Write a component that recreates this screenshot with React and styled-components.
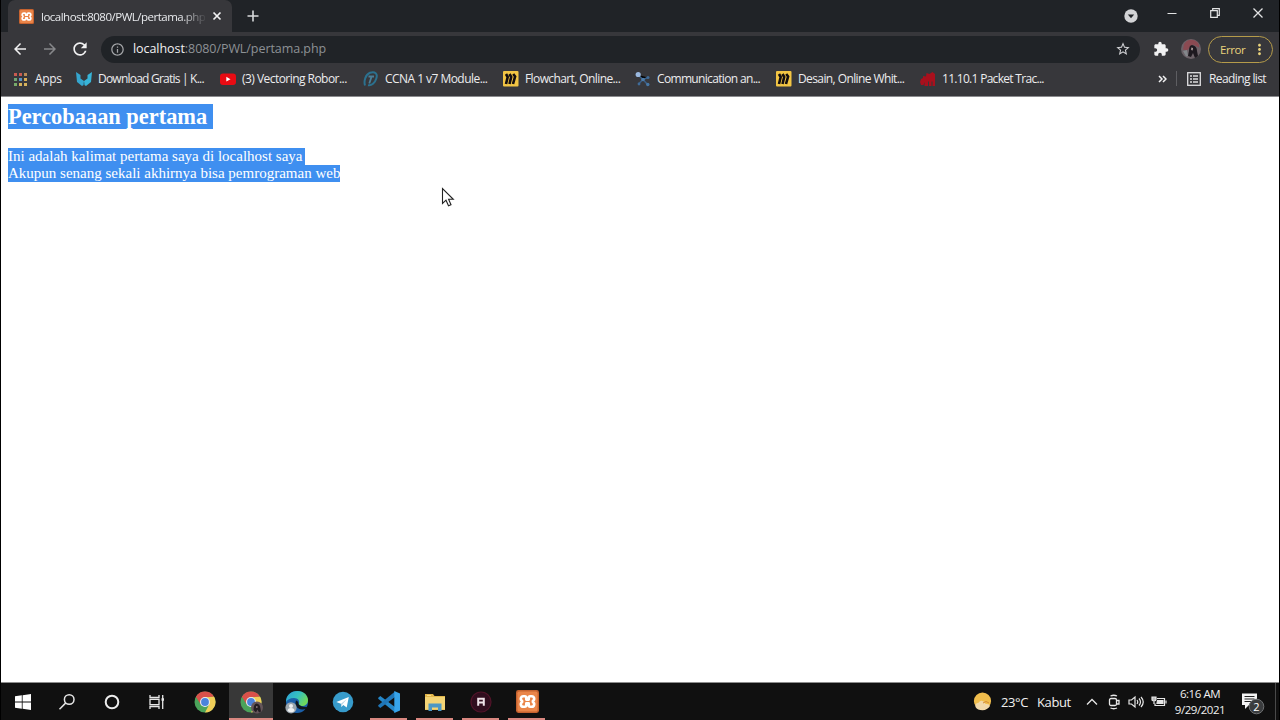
import React from "react";
import styled, { createGlobalStyle, css } from "styled-components";
import {
  MdArrowBack,
  MdArrowForward,
  MdRefresh,
  MdInfoOutline,
  MdStarBorder,
  MdExtension,
  MdMoreVert
} from "react-icons/md";

const GlobalStyle = createGlobalStyle`
  * {
    box-sizing: border-box;
  }
  body {
    margin: 0;
    overflow: hidden;
    background: #000;
  }
  svg {
    display: block;
    flex: none;
  }
`;

const Desktop = styled.div`
  width: 1280px;
  height: 720px;
  display: flex;
  flex-direction: column;
  border-left: 1px solid #000;
  border-right: 1px solid #000;
  background: #fff;
  font-family: "Open Sans", "Noto Sans", sans-serif;
  overflow: hidden;
`;

const Label = styled.span`
  font-size: ${props => props.size || 12}px;
  font-stretch: 94%;
  letter-spacing: ${props => props.spacing || 0}px;
  white-space: pre;
`;

/* window frame */

const TabStrip = styled.div`
  height: 32px;
  display: flex;
  align-items: center;
  background: #202327;
  color: #e8eaed;
`;

const Tab = styled.div`
  width: 224px;
  height: 32px;
  margin-left: 7px;
  padding: 0 9px 0 11px;
  display: flex;
  align-items: center;
  background: #37373b;
  border-radius: 7px 7px 0 0;
`;

const TabTitle = styled.div`
  width: 164px;
  margin-left: 7px;
  margin-right: 7px;
  overflow: hidden;
  line-height: 20px;
  mask-image: linear-gradient(to right, #000 140px, transparent 166px);
`;

const NewTab = styled.div`
  margin-left: 15px;
`;

const WindowButtons = styled.div`
  margin-left: auto;
  display: flex;
  align-items: center;
`;

const WindowButton = styled.div`
  width: ${props => props.width}px;
  display: flex;
  justify-content: center;
  padding-bottom: ${props => props.lift || 0}px;
`;

const Toolbar = styled.div`
  height: 34px;
  padding-left: 4px;
  display: flex;
  align-items: center;
  background: #37373b;
  color: #f1f1f2;
`;

const NavButton = styled.div`
  width: 30px;
  display: flex;
  justify-content: center;
  color: ${props => (props.dim ? "#87888b" : "#f1f1f2")};
`;

const Omnibox = styled.div`
  width: 1039px;
  height: 27px;
  margin-left: 6px;
  padding: 0 9px;
  display: flex;
  align-items: center;
  border-radius: 14px;
  background: #202327;
  color: #f1f1f2;
`;

const Address = styled(Label)`
  margin-left: 8px;
  line-height: 20px;
`;

const Path = styled.span`
  color: #8d9195;
`;

const StarSlot = styled.div`
  margin-left: auto;
  color: #d0d1d4;
`;

const ExtensionSlot = styled.div`
  margin-left: 13px;
`;

const AvatarSlot = styled.div`
  margin-left: 12px;
`;

const ErrorPill = styled.div`
  width: 65px;
  height: 27px;
  margin-left: 7px;
  padding: 0 4px 0 11px;
  display: flex;
  align-items: center;
  justify-content: space-between;
  border: 1px solid #b59b4a;
  border-radius: 14px;
  color: #e9d27c;
`;

const BookmarksBar = styled.div`
  height: 31px;
  padding: 0 12px 5px;
  display: flex;
  align-items: center;
  background: #37373b;
  border-bottom: 1px solid #8b8b8e;
  color: #ececee;
`;

const Bookmark = styled.div`
  width: ${props => props.width}px;
  display: flex;
  align-items: center;
  gap: ${props => props.gap || 6}px;
  line-height: 18px;
`;

const BookmarksEnd = styled.div`
  margin-left: auto;
  display: flex;
  align-items: center;
  line-height: 18px;
`;

const Divider = styled.div`
  width: 1px;
  height: 15px;
  margin: 0 10px 0 9px;
  background: #5e5e62;
`;

/* the php page */

const Page = styled.main`
  position: relative;
  flex: 1;
  padding: 7px 7px 0;
  background: #fff;
  font-family: "Liberation Serif", "Times New Roman", serif;
  color: #fff;
`;

const Heading = styled.h2`
  height: 25px;
  width: 205px;
  margin: 0 0 19px;
  background: #3f8ff0;
  font-size: 22.4px;
  line-height: 25px;
  white-space: nowrap;
`;

const Paragraph = styled.p`
  margin: 0;
  font-size: 15px;
  line-height: 17px;
`;

const Line = styled.span`
  display: block;
  width: ${props => props.width}px;
  height: 17px;
  background: #3f8ff0;
  white-space: nowrap;
`;

const Pointer = styled.svg`
  position: absolute;
  left: 440px;
  top: 90px;
`;

/* taskbar */

const Taskbar = styled.footer`
  height: 37px;
  display: flex;
  background: #101010;
  box-shadow: 0 -1px 0 #8d8d8d;
  position: relative;
  color: #f0f0f0;
`;

const SystemButton = styled.div`
  width: ${props => props.width || 45}px;
  display: flex;
  align-items: center;
  justify-content: center;
`;

const AppButton = styled.div`
  width: 46px;
  display: flex;
  align-items: center;
  justify-content: center;
  ${props =>
    props.running &&
    css`
      background: linear-gradient(#d98780, #d98780) 4px bottom / 37px 2px
        no-repeat;
    `};
  ${props =>
    props.active &&
    css`
      width: 44px;
      margin: 0 1px;
      background: #383838;
      border-bottom: 2px solid #d98780;
      padding-top: 2px;
    `};
`;

const AppList = styled.div`
  margin-left: 3px;
  display: flex;
`;

const Tray = styled.div`
  margin-left: auto;
  display: flex;
  align-items: center;
`;

const Weather = styled.div`
  width: 113px;
  display: flex;
  align-items: center;
  gap: 9px;
`;

const TrayIcon = styled.div`
  width: ${props => props.width}px;
  display: flex;
`;

const Clock = styled.div`
  width: 64px;
  display: flex;
  flex-direction: column;
  align-items: center;
  line-height: 16px;
`;

const Notifications = styled.div`
  width: 34px;
  margin-left: 9px;
  padding-top: 5px;
`;

const ShowDesktop = styled.div`
  width: 4px;
  height: 37px;
  border-left: 1px solid #4a4a4a;
`;

const XamppIcon = ({ size }) => (
  <svg width={size} height={size} viewBox="0 0 24 24">
    <rect width="24" height="24" rx="2.5" fill="#c5622f" />
    <rect x="1.5" y="1.5" width="21" height="21" rx="2" fill="#ea8549" />
    <path
      d="M9.200 6.500H7.600a2.600 2.600 0 0 0-1.200 4.900v1.200a2.600 2.600 0 0 0 1.200 4.900h1.600q1.500 0 1.500-1.500v-2h2.600v2q0 1.500 1.500 1.500h1.600a2.600 2.600 0 0 0 1.200-4.900v-1.200a2.600 2.600 0 0 0-1.200-4.900h-1.600q-1.500 0-1.500 1.500v2h-2.600V8q0-1.500-1.500-1.500Z"
      fill="none"
      stroke="#fff"
      strokeWidth="2.700"
      strokeLinejoin="round"
    />
  </svg>
);

const AppsIcon = () => (
  <svg width="14" height="14" viewBox="0 0 14 14">
    <path d="M1 1h3v3H1zM6 1h3v3H6z" fill="#c95a50" />
    <path d="M11 1h3v3h-3z" fill="#b98a55" />
    <path d="M1 6h3v3H1z" fill="#6fa672" />
    <path d="M6 6h3v3H6z" fill="#5a93c4" />
    <path d="M11 6h3v3h-3z" fill="#d9ad55" />
    <path d="M1 11h3v3H1z" fill="#78ab6b" />
    <path d="M6 11h3v3H6zM11 11h3v3h-3z" fill="#d6b25c" />
  </svg>
);

const WingsIcon = () => (
  <svg width="16" height="16" viewBox="0 0 16 16">
    <path d="M0 1l4.500 3v3.500L8 10l-.3 4-1.700 1-5-4z" fill="#35a6cf" />
    <path d="M16 1l-4.500 3v3.500L8 10l.3 4 1.700 1 5-4z" fill="#37b4d8" />
    <path d="M8 10l.5 4h-1z" fill="#236f93" />
  </svg>
);

const YoutubeIcon = () => (
  <svg width="16" height="16" viewBox="0 0 16 16">
    <rect y="2.5" width="16" height="11.5" rx="3" fill="#e80b13" />
    <path d="M6.3 5.8v4.800L10.500 8.200z" fill="#fff" />
  </svg>
);

const NetacadIcon = () => (
  <svg width="16" height="16" viewBox="0 0 16 16" fill="none">
    <path
      d="M2 14.500C.6 10 2.500 3.500 7 1.800c5-1.500 8 .6 6.300 5.700C12 12 8.500 15 5 14.200"
      stroke="#2b718f"
      strokeWidth="2"
    />
    <path d="M5.500 5.500h5.500M8.600 5.500L6.300 12.500" stroke="#4a7f98" strokeWidth="1.800" />
  </svg>
);

const MiroIcon = () => (
  <svg width="16" height="16" viewBox="0 0 16 16">
    <rect width="15.500" height="15.500" rx="1" fill="#f2c544" />
    <path
      d="M3 3l1.700 3L3 13M6.500 3l1.700 3-1.700 7M10.200 3l1.900 2.500L10 13"
      fill="none"
      stroke="#120d10"
      strokeWidth="2.600"
    />
  </svg>
);

const NodesIcon = () => (
  <svg width="16" height="16" viewBox="0 0 16 16">
    <path
      d="M3 4l5 4.500 5-2M8 8.500l-4 4M8 8.500l4.500 5"
      stroke="#3c5f86"
      strokeWidth="1.500"
    />
    <circle cx="3.200" cy="3.500" r="2.600" fill="#9ab8df" />
    <circle cx="8" cy="8.500" r="1.800" fill="#4d7dab" />
    <circle cx="13" cy="6.500" r="1.500" fill="#3f6b98" />
    <circle cx="4" cy="13" r="1.400" fill="#3f6b98" />
    <circle cx="12.800" cy="13.500" r="1.700" fill="#4677a6" />
  </svg>
);

const RedIcon = () => (
  <svg width="16" height="16" viewBox="0 0 16 16">
    <path
      d="M0 11l1-3 2-1V5l3 .5L6.500 2l3 1 3-2L15 3v12h-2.500v-4.500h-1V15H9v-4.500H8V15H4.500v-4l-1 3H1z"
      fill="#a9101d"
    />
  </svg>
);

const ListIcon = () => (
  <svg width="14" height="14" viewBox="0 0 14 14" fill="none" stroke="#dedee0">
    <rect x=".7" y=".7" width="12.600" height="12.600" strokeWidth="1.300" />
    <path d="M3 4h2M3 7h2M3 10h2M6 4h5M6 7h5M6 10h5" strokeWidth="1.300" />
  </svg>
);

const Avatar = ({ size }) => (
  <svg width={size} height={size} viewBox="0 0 20 20">
    <circle cx="10" cy="10" r="10" fill="#6c6268" />
    <path d="M3 5Q7-1 14 1.500q5 3 4 7l-6-3-6 6-4-1z" fill="#8a4a52" />
    <path d="M8 12q0-6 3-6 5 1 5 6l1 5-3 2-2-5-2 4-3-1z" fill="#1d191f" />
    <path d="M10.500 8.500l1.300.5-.3 2.500-1.200-.5z" fill="#d7c3c0" />
    <path d="M2 12l4-1 1 6-2 .5z" fill="#83878b" />
  </svg>
);

const ChromeIcon = ({ badge }) => (
  <svg width="24" height="24" viewBox="0 0 24 24">
    <circle cx="12" cy="12" r="10.500" fill="#4ba35a" />
    <path d="M2.900 6.750A10.500 10.500 0 0 1 21.100 6.750L12 7.200 7.800 14.400z" fill="#d9504a" />
    <path d="M21.100 6.750A10.500 10.500 0 0 1 12 22.500L16.200 14.400 12 7.200z" fill="#f0cf58" />
    <circle cx="12" cy="12" r="5" fill="#e9edf2" />
    <circle cx="12" cy="12" r="3.900" fill="#4a83dc" />
    {badge && (
      <g>
        <circle cx="18" cy="17.500" r="6" fill="#65565b" />
        <path d="M14.500 20q0-6 3-6.500 3.500.5 4 5l.5 3-2 1-1.500-3-1.500 3z" fill="#231d22" />
        <path d="M17.500 16l1 .5-.3 1.500-.9-.3z" fill="#c9aeb0" />
      </g>
    )}
  </svg>
);

const EdgeIcon = () => (
  <svg width="24" height="24" viewBox="0 0 24 24">
    <defs>
      <linearGradient id="edge-top" x1="0" y1="0" x2="1" y2=".5">
        <stop offset="0" stopColor="#2c9fd8" />
        <stop offset=".55" stopColor="#35c1c0" />
        <stop offset="1" stopColor="#6fd95c" />
      </linearGradient>
    </defs>
    <circle cx="12" cy="12" r="11" fill="#1b5fa8" />
    <path
      d="M1 12C1 5 6 1 12.500 1 19 1 23 5.500 23 10c0 4-3 6-6 6-2.500 0-4-1-3-2.500C15 11 13 8 9 8c-4 0-7 2-8 4z"
      fill="url(#edge-top)"
    />
    <path
      d="M11 10.500q2.500.5 2.500 3.500 2.500 3.500 9 3l-1.300 2q-8 1.500-10-3-1.500-3-.2-5.500z"
      fill="#101820"
    />
    <circle cx="6" cy="17.800" r="5.600" fill="#9aa5ad" />
    <circle cx="6" cy="16" r="2" fill="#eef0f1" />
    <path d="M2.500 21q0-3 3.500-3t3.500 3q-3 2.500-7 0z" fill="#eef0f1" />
  </svg>
);

const TelegramIcon = () => (
  <svg width="22" height="22" viewBox="0 0 22 22">
    <circle cx="11" cy="11" r="10.300" fill="#379bcb" />
    <path d="M4.300 11L16.800 6 14.700 16.500l-3.400-2.400-1.900 1.800-.5-3.200z" fill="#fff" />
    <path d="M8.900 12.700l6-4.700-4.600 5.400-.9 2.500z" fill="#b9d5e5" />
  </svg>
);

const VscodeIcon = () => (
  <svg width="24" height="24" viewBox="0 0 24 24">
    <path d="M1 8l2.300-2L18 17v5.500L1.500 9z" fill="#2587c8" />
    <path d="M1 16l2.300 2L18 7V1.500L1.500 15z" fill="#1f76b8" />
    <path d="M17.300 1L23 3.500v17L17.300 23z" fill="#37a4ea" />
  </svg>
);

const FolderIcon = () => (
  <svg width="22" height="20" viewBox="0 0 22 20">
    <path d="M1 2h8l1.500 2H21v14H1z" fill="#e2b64a" />
    <path d="M1 5h20v12.500H1z" fill="#f3d476" />
    <path d="M4.500 19v-7.500h13V19H14v-3.500H8V19z" fill="#4d97c4" />
    <path d="M3 3h4v1H3z" fill="#f6dc8d" />
  </svg>
);

const AIcon = () => (
  <svg width="22" height="22" viewBox="0 0 22 22">
    <circle cx="11" cy="11" r="10" fill="#300e1e" stroke="#511429" strokeWidth="1.200" />
    <path
      d="M8.200 14.800V7.700h5.600v7.100M8.200 11.600h5.600"
      fill="none"
      stroke="#eee3e8"
      strokeWidth="2"
    />
  </svg>
);

const WindowsIcon = () => (
  <svg width="16" height="16" viewBox="0 0 16 16" fill="#fff">
    <path d="M0 2.300l6.800-1v6.300H0zM7.600 1.200L16 0v7.600H7.600zM0 8.400h6.800v6.300L0 13.700zM7.600 8.400H16V16l-8.400-1.200z" />
  </svg>
);

const SearchIcon = () => (
  <svg width="18" height="18" viewBox="0 0 18 18" fill="none" stroke="#e6e6e6" strokeWidth="1.500">
    <circle cx="11.200" cy="6.500" r="4.800" />
    <path d="M7.800 9.900L1.500 16.300" />
  </svg>
);

const TaskViewIcon = () => (
  <svg width="18" height="16" viewBox="0 0 18 16" fill="none" stroke="#e6e6e6" strokeWidth="1.300">
    <path d="M2 1v2.500h9V1M2 15v-2.500h9V15M2 5.300h9v5.400H2z" />
    <path d="M14.700 1v14" />
    <path d="M13.500 5.500H16" strokeWidth="2.500" />
  </svg>
);

const WeatherIcon = () => (
  <svg width="19" height="19" viewBox="0 0 19 19">
    <circle cx="9.500" cy="9" r="8.600" fill="#f0bd4c" />
    <path d="M2.500 15q-1-4 3-4.300 2-3 5-1.200 2 1 2 2.500 4-.5 4.500 2-2.500 4-7.500 4.300-5 0-7-3.300z" fill="#f1d9ab" />
    <path d="M10 11q3-3 6 0" stroke="#d28a39" fill="none" />
  </svg>
);

const bookmarks = [
  { title: "Apps", icon: <AppsIcon />, width: 63, spacing: -0.35, gap: 8 },
  { title: "Download Gratis | K...", icon: <WingsIcon />, width: 144, spacing: -0.78 },
  { title: "(3) Vectoring Robor...", icon: <YoutubeIcon />, width: 143, spacing: -0.54 },
  { title: "CCNA 1 v7 Module...", icon: <NetacadIcon />, width: 140, spacing: -0.54 },
  { title: "Flowchart, Online...", icon: <MiroIcon />, width: 132, spacing: -0.6 },
  { title: "Communication an...", icon: <NodesIcon />, width: 141, spacing: -0.66 },
  { title: "Desain, Online Whit...", icon: <MiroIcon />, width: 144, spacing: -0.6 },
  { title: "11.10.1 Packet Trac...", icon: <RedIcon />, width: 140, spacing: -0.7 }
];

const apps = [
  { name: "chrome", icon: <ChromeIcon /> },
  { name: "chrome-profile", icon: <ChromeIcon badge />, active: true },
  { name: "edge", icon: <EdgeIcon /> },
  { name: "telegram", icon: <TelegramIcon /> },
  { name: "vscode", icon: <VscodeIcon />, running: true },
  { name: "explorer", icon: <FolderIcon />, running: true },
  { name: "a", icon: <AIcon />, running: true },
  { name: "xampp", icon: <XamppIcon size={23} />, running: true }
];

const BrowserTabs = () => (
  <TabStrip>
    <Tab>
      <XamppIcon size={15} />
      <TabTitle>
        <Label size={11.5} spacing={-0.5}>
          localhost:8080/PWL/pertama.php
        </Label>
      </TabTitle>
      <svg width="10" height="10" viewBox="0 0 10 10">
        <path d="M1.500 1.500l7 7M8.500 1.500l-7 7" stroke="#f1f1f2" strokeWidth="1.700" />
      </svg>
    </Tab>
    <NewTab>
      <svg width="12" height="12" viewBox="0 0 12 12">
        <path d="M6 .5v11M.5 6h11" stroke="#d8dadc" strokeWidth="1.600" />
      </svg>
    </NewTab>
    <WindowButtons>
      <WindowButton width={38}>
        <svg width="14" height="14" viewBox="0 0 14 14">
          <circle cx="7" cy="7" r="6.700" fill="#d3d4d6" />
          <path d="M3.800 5.500h6.400L7 9.300z" fill="#202327" />
        </svg>
      </WindowButton>
      <WindowButton width={43} lift={6}>
        <svg width="10" height="10" viewBox="0 0 10 10">
          <path d="M.5 5.500h9" stroke="#e2e3e4" />
        </svg>
      </WindowButton>
      <WindowButton width={43} lift={6}>
        <svg width="10" height="10" viewBox="0 0 10 10" fill="none" stroke="#e2e3e4" strokeWidth="1.200">
          <path d="M.7 2.700h6.600v6.600H.7zM2.700 2.700v-2h6.600v6.600h-2" />
        </svg>
      </WindowButton>
      <WindowButton width={43} lift={6}>
        <svg width="10" height="10" viewBox="0 0 10 10">
          <path d="M.5.500l9 9M9.500.500l-9 9" stroke="#e2e3e4" strokeWidth="1.300" />
        </svg>
      </WindowButton>
    </WindowButtons>
  </TabStrip>
);

const BrowserToolbar = () => (
  <Toolbar>
    <NavButton>
      <MdArrowBack size={18} />
    </NavButton>
    <NavButton dim>
      <MdArrowForward size={18} />
    </NavButton>
    <NavButton>
      <MdRefresh size={20} />
    </NavButton>
    <Omnibox>
      <MdInfoOutline size={15} color="#a4a6a9" />
      <Address size={12.5} spacing={-0.06}>
        localhost<Path>:8080/PWL/pertama.php</Path>
      </Address>
      <StarSlot>
        <MdStarBorder size={16} />
      </StarSlot>
    </Omnibox>
    <ExtensionSlot>
      <MdExtension size={16} />
    </ExtensionSlot>
    <AvatarSlot>
      <Avatar size={20} />
    </AvatarSlot>
    <ErrorPill>
      <Label size={11.5} spacing={-0.4}>
        Error
      </Label>
      <MdMoreVert size={17} />
    </ErrorPill>
  </Toolbar>
);

const App = () => (
  <Desktop>
    <GlobalStyle />
    <BrowserTabs />
    <BrowserToolbar />
    <BookmarksBar>
      {bookmarks.map(({ title, icon, width, spacing, gap }) => (
        <Bookmark key={title} width={width} gap={gap}>
          {icon}
          <Label spacing={spacing}>{title}</Label>
        </Bookmark>
      ))}
      <BookmarksEnd>
        <svg width="9" height="8" viewBox="0 0 9 8" fill="none" stroke="#f1f1f2" strokeWidth="1.500">
          <path d="M1 1l3 3-3 3M5 1l3 3-3 3" />
        </svg>
        <Divider />
        <Bookmark width={80} gap={8}>
          <ListIcon />
          <Label spacing={-0.6}>Reading list</Label>
        </Bookmark>
      </BookmarksEnd>
    </BookmarksBar>
    <Page>
      <Heading>Percobaaan pertama</Heading>
      <Paragraph>
        <Line width={297}>Ini adalah kalimat pertama saya di localhost saya</Line>
        <Line width={332}>Akupun senang sekali akhirnya bisa pemrograman web</Line>
      </Paragraph>
      <Pointer width="14" height="20" viewBox="0 0 14 20">
        <path
          d="M1.500 1.500v15l3.500-3.300 2.500 5.500 2.500-1-2.400-5.400h4.700z"
          fill="#fff"
          stroke="#222"
          strokeWidth="1.100"
        />
      </Pointer>
    </Page>
    <Taskbar>
      <SystemButton width={43}>
        <WindowsIcon />
      </SystemButton>
      <SystemButton>
        <SearchIcon />
      </SystemButton>
      <SystemButton>
        <svg width="16" height="16" viewBox="0 0 16 16">
          <circle cx="8" cy="8" r="6.300" fill="none" stroke="#ececec" strokeWidth="2" />
        </svg>
      </SystemButton>
      <SystemButton>
        <TaskViewIcon />
      </SystemButton>
      <AppList>
        {apps.map(({ name, icon, running, active }) => (
          <AppButton key={name} running={running} active={active}>
            {icon}
          </AppButton>
        ))}
      </AppList>
      <Tray>
        <Weather>
          <WeatherIcon />
          <Label size={13} spacing={-0.4}>
            23°C
          </Label>
          <Label size={13} spacing={-0.4}>
            Kabut
          </Label>
        </Weather>
        <TrayIcon width={22}>
          <svg width="12" height="8" viewBox="0 0 12 8">
            <path d="M1 6.500l5-5 5 5" fill="none" stroke="#e6e6e6" strokeWidth="1.300" />
          </svg>
        </TrayIcon>
        <TrayIcon width={20}>
          <svg width="13" height="16" viewBox="0 0 13 16" fill="none" stroke="#e6e6e6" strokeWidth="1.300">
            <rect x="1.500" y="4.500" width="7" height="7" rx="1.500" />
            <path d="M8.500 6.500H11v3.500H8.500M2.500 2q3.300-1.500 6.500 0M2.500 14q3.300 1.500 6.500 0" />
          </svg>
        </TrayIcon>
        <TrayIcon width={23}>
          <svg width="17" height="14" viewBox="0 0 17 14" fill="none" stroke="#e6e6e6" strokeWidth="1.200">
            <path d="M1 5h2.500L7 2v10L3.500 9H1z" />
            <path d="M9 5q1.500 2 0 4M11 3.500q3 3.500 0 7M13 2q4.500 5 0 10" />
          </svg>
        </TrayIcon>
        <TrayIcon width={17}>
          <svg width="16" height="14" viewBox="0 0 16 14" fill="none" stroke="#e6e6e6" strokeWidth="1.200">
            <path d="M6 3.500h7.500v7H4V8.500" />
            <path d="M15 5.500v3" />
            <path d="M6.500 5.500h5.500v3H6z" fill="#e6e6e6" />
            <path d="M1 2h4v2.500q0 1.500-2 1.500T1 4.500zM3 6v3" fill="#bbb" />
          </svg>
        </TrayIcon>
        <Clock>
          <Label size={11.5} spacing={-0.45}>
            6:16 AM
          </Label>
          <Label size={11.5} spacing={-0.45}>
            9/29/2021
          </Label>
        </Clock>
        <Notifications>
          <svg width="25" height="26" viewBox="0 0 25 26">
            <path d="M1 2.500h15v11.500H8L4 18v-4H1z" fill="#f4f4f4" />
            <path d="M3.500 5.500h10M3.500 8h10M3.500 10.500h10" stroke="#222" />
            <circle cx="15.500" cy="15.500" r="7.300" fill="#3a3c3e" stroke="#707274" />
            <text x="15.500" y="19.500" textAnchor="middle" fill="#fff" fontSize="11">
              2
            </text>
          </svg>
        </Notifications>
        <ShowDesktop />
      </Tray>
    </Taskbar>
  </Desktop>
);

export default App;
